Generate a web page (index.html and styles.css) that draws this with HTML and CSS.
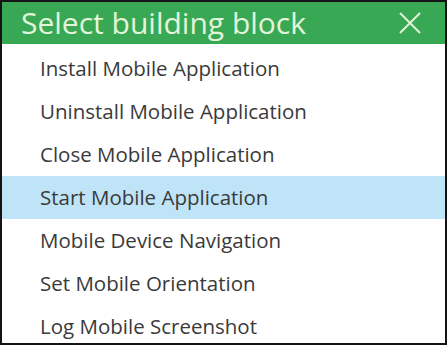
FILE: index.html
```html
<!DOCTYPE html>
<html>
<head>
<meta charset="utf-8">
<link rel="stylesheet" href="styles.css">
</head>
<body>
<div class="dialog">
  <div class="header">
    <span class="title">Select building block</span>
    <svg class="close" width="22" height="22" viewBox="0 0 22 22"><path d="M1 1 L21 21 M21 1 L1 21" stroke="#dff3d6" stroke-width="2" fill="none"/></svg>
  </div>
  <ul class="list">
    <li class="item">Install Mobile Application</li>
    <li class="item">Uninstall Mobile Application</li>
    <li class="item">Close Mobile Application</li>
    <li class="item selected">Start Mobile Application</li>
    <li class="item">Mobile Device Navigation</li>
    <li class="item">Set Mobile Orientation</li>
    <li class="item">Log Mobile Screenshot</li>
  </ul>
</div>
</body>
</html>
```
FILE: styles.css
```css
html, body {
  margin: 0;
  padding: 0;
  background: #ffffff;
}
.dialog {
  width: 447px;
  height: 345px;
  box-sizing: border-box;
  border: 2px solid #141414;
  overflow: hidden;
  background: #fff;
  font-family: "Open Sans", "Noto Sans", sans-serif;
}
.header {
  height: 42px;
  background: #38a855;
  display: flex;
  align-items: center;
  justify-content: space-between;
  padding: 0 24px 0 19px;
}
.title {
  color: #e2f5da;
  font-size: 30px;
  letter-spacing: 0;
  line-height: 42px;
}
.close {
  display: block;
}
.list {
  list-style: none;
  margin: 0;
  padding: 3px 0 0 0;
}
.item {
  height: 43px;
  line-height: 43px;
  padding-left: 38px;
  font-size: 20.5px;
  color: #3a3a3a;
}
.item.selected {
  background: #bfe4f8;
}
```
